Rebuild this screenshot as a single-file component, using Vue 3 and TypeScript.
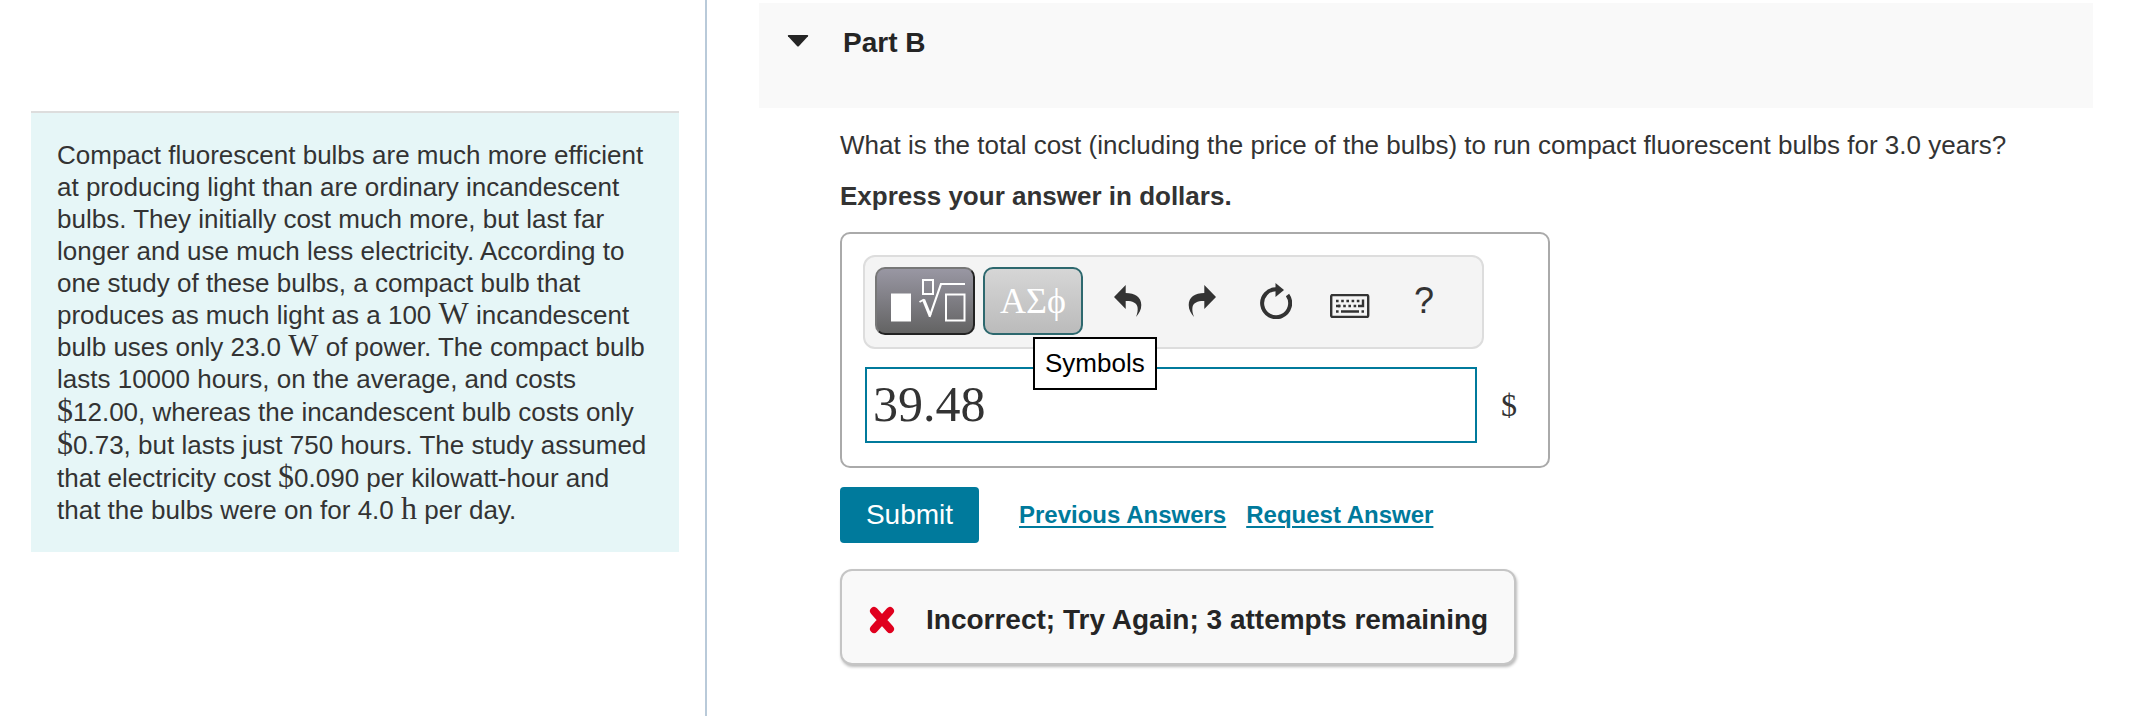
<script setup lang="ts">
import { ref } from 'vue'

const open = ref(true)
const answer = ref('39.48')
</script>

<template>
  <div class="page">
    <aside class="intro">
      <p class="problem">
        Compact fluorescent bulbs are much more efficient at producing light than are ordinary
        incandescent bulbs. They initially cost much more, but last far longer and use much less
        electricity. According to one study of these bulbs, a compact bulb that produces as much
        light as a 100 <span class="math">W</span> incandescent bulb uses only 23.0
        <span class="math">W</span> of power. The compact bulb lasts 10000 hours, on the average,
        and costs <span class="math cash">$</span>12.00, whereas the incandescent bulb costs only
        <span class="math cash">$</span>0.73, but lasts just 750 hours. The study assumed that
        electricity cost <span class="math cash">$</span>0.090 per kilowatt-hour and that the bulbs
        were on for 4.0 <span class="math">h</span> per day.
      </p>
    </aside>

    <main class="work">
      <header class="part">
        <button class="toggle" type="button" :aria-expanded="open" aria-label="Toggle Part B" @click="open = !open">
          <svg width="22" height="12" viewBox="0 0 22 12" aria-hidden="true">
            <path d="M1 1.2Q.2 0 1.8 0H20.200Q21.800 0 21 1.200L12 11Q11 12 10 11Z" fill="#252525" />
          </svg>
        </button>
        <h2>Part B</h2>
      </header>

      <section v-show="open" class="question">
        <p class="prompt">
          What is the total cost (including the price of the bulbs) to run compact fluorescent bulbs for 3.0 years?
        </p>
        <p class="instruction" id="instruction">Express your answer in dollars.</p>

        <div class="answer">
          <div class="toolbar" role="toolbar" aria-label="Math tools">
            <button class="key templates" type="button" aria-label="Templates">
              <svg width="96" height="64" viewBox="2 2 96 64" fill="none" stroke="#fff" aria-hidden="true">
                <path d="M16 26.500H36V54.500H16Z" fill="#fff" stroke="none" />
                <path d="M48 13H58V27H48ZM71 27.500H89.500V53.500H71Z" stroke-width="2" />
                <path d="M44.500 35L49 32.500" stroke-width="2" />
                <path d="M48.500 32.500L55 48.500" stroke-width="3.200" />
                <path d="M54.500 50L66 17H90" stroke-width="2.200" />
              </svg>
            </button>
            <div class="with-tip">
              <button class="key symbols" type="button" aria-describedby="symbols-tip">ΑΣϕ</button>
              <span id="symbols-tip" class="tip" role="tooltip">Symbols</span>
            </div>
            <div class="actions">
              <button type="button" aria-label="Undo">
                <svg width="28" height="32" viewBox="0 0 28 32" fill="#333" aria-hidden="true">
                  <path d="M0 12L11.700 0V8C21 8 27.300 12 27.300 20C27.300 25 25 28.500 22 32C23.500 28 24 25 23.500 22C22.500 17.500 18 15.800 11.700 16V24Z" />
                </svg>
              </button>
              <button type="button" aria-label="Redo">
                <svg width="28" height="32" viewBox="0 0 28 32" fill="#333" aria-hidden="true">
                  <path d="M28 12L16.300 0V8C7 8 .7 12 .7 20C.7 25 3 28.500 6 32C4.500 28 4 25 4.500 22C5.500 17.500 10 15.800 16.300 16V24Z" />
                </svg>
              </button>
              <button type="button" aria-label="Reset">
                <svg width="32" height="36" viewBox="0 0 32 36" aria-hidden="true">
                  <path d="M27.500 12A14 14 0 1 1 17 6.200" fill="none" stroke="#333" stroke-width="4" />
                  <path d="M15.500 0L24 7L15.500 14Z" fill="#333" />
                </svg>
              </button>
              <button class="low" type="button" aria-label="Keyboard shortcuts">
                <svg width="40" height="24" viewBox="0 0 40 24" aria-hidden="true">
                  <rect x="1.200" y="1" width="37" height="22" rx="1.500" fill="#f4f4f4" stroke="#333" stroke-width="2.400" />
                  <path d="M6 7H30M8 12H28" fill="none" stroke="#333" stroke-width="2.400" stroke-dasharray="2.600 2.600" />
                  <path d="M6 12H10M28 12H33V5.500M6 17.500H8.600M11 17.500H29M31.500 17.500H34" fill="none" stroke="#333" stroke-width="2.400" />
                </svg>
              </button>
              <button class="help" type="button" aria-label="Help">?</button>
            </div>
          </div>
          <div class="entry">
            <input v-model="answer" type="text" aria-label="Answer in dollars" aria-describedby="instruction" />
            <span class="unit">$</span>
          </div>
        </div>

        <div class="submit-row">
          <button class="submit" type="button">Submit</button>
          <a href="#previous">Previous Answers</a>
          <a href="#request">Request Answer</a>
        </div>

        <div class="feedback" role="status">
          <svg width="28" height="28" viewBox="0 0 28 28" aria-hidden="true">
            <path d="M6 5L22 23M22 5L6 23" stroke="#e0001e" stroke-width="8" stroke-linecap="round" />
          </svg>
          <strong>Incorrect; Try Again; 3 attempts remaining</strong>
        </div>
      </section>
    </main>
  </div>
</template>

<style>
body {
  margin: 0;
  background: #fff;
}
</style>

<style scoped>
.page {
  display: grid;
  grid-template-columns: minmax(0, 707fr) minmax(0, 1427fr);
  min-height: 100vh;
  color: #333;
  font: 26px/32px "Liberation Sans", Arial, sans-serif;
}

button {
  margin: 0;
  padding: 0;
  border: 0;
  background: none;
  color: inherit;
  font: inherit;
  cursor: pointer;
}

svg {
  display: block;
}

.intro {
  padding: 111px 26px 0 31px;
  border-right: 2px solid #b9cad9;
}

.problem {
  margin: 0;
  padding: 26px 26px 26px;
  border-top: 2px solid #ddd;
  background: #e6f6f7;
}

.math {
  font: 32px/28px "Liberation Serif", "Times New Roman", serif;
}

.cash {
  line-height: 30px;
}

.work {
  padding: 3px 41px 24px 52px;
}

.part {
  display: flex;
  align-items: flex-start;
  box-sizing: border-box;
  min-height: 105px;
  padding: 22px 28px;
  background: #f9f9f9;
  color: #252525;
}

.toggle {
  display: grid;
  place-items: center;
  width: 22px;
  height: 32px;
  margin-right: 34px;
}

h2 {
  margin: 0;
  font-size: 28px;
  line-height: 36px;
}

.question {
  padding: 21px 0 0 81px;
}

.prompt {
  margin: 0 0 19px;
}

.instruction {
  margin: 0 0 20px;
  font-weight: bold;
}

.answer {
  box-sizing: border-box;
  max-width: 710px;
  padding: 21px 22px 23px 21px;
  border: 2px solid #aaa;
  border-radius: 10px;
}

.toolbar {
  display: flex;
  align-items: center;
  gap: 8px;
  box-sizing: border-box;
  max-width: 621px;
  height: 94px;
  padding: 0 10px 2px;
  border: 2px solid #ddd;
  border-radius: 12px;
  background: #f4f4f4;
}

.key {
  display: block;
  box-sizing: border-box;
  width: 100px;
  height: 68px;
  border: 2px solid;
  border-radius: 10px;
  color: #fff;
}

.templates {
  border-color: #777 #222 #222 #777;
  background: linear-gradient(#9997a3, #636363);
}

.symbols {
  border-color: #2d686e;
  background: linear-gradient(#d6d6d6, #bbb);
  font: 36px/60px "Liberation Serif", "Times New Roman", serif;
}

.with-tip {
  position: relative;
}

.tip {
  position: absolute;
  top: 70px;
  left: 50px;
  z-index: 1;
  padding: 9px 10px 10px;
  border: 2px solid #000;
  background: #fff;
  color: #000;
  font-size: 26px;
  line-height: 30px;
}

.actions {
  display: flex;
  align-items: center;
}

.actions button {
  display: grid;
  place-items: center;
  width: 74px;
  height: 68px;
}

.actions .low {
  padding-top: 10px;
}

.actions .help {
  font-size: 36px;
}

.entry {
  display: flex;
  align-items: center;
  gap: 24px;
  margin: 18px 0 0 2px;
}

.entry input {
  box-sizing: border-box;
  flex: 0 1 612px;
  min-width: 0;
  height: 76px;
  padding: 0 6px 2px;
  border: 2px solid #007a9c;
  border-radius: 0;
  outline: 0;
  background: #fff;
  color: #333;
  font: 50px/70px "Liberation Serif", "Times New Roman", serif;
}

.unit {
  font: 32px/32px "Liberation Serif", "Times New Roman", serif;
}

.submit-row {
  display: flex;
  align-items: center;
  gap: 20px;
  margin: 19px 0 26px;
}

.submit {
  width: 139px;
  height: 56px;
  margin-right: 20px;
  border-radius: 4px;
  background: #007a9c;
  color: #fff;
  font-size: 28px;
}

a {
  color: #007a9c;
  font-size: 24px;
  font-weight: bold;
  text-decoration-thickness: 2px;
  text-underline-offset: 3px;
}

.feedback {
  display: flex;
  align-items: center;
  gap: 30px;
  box-sizing: border-box;
  width: fit-content;
  min-height: 96px;
  padding: 5px 26px 0;
  border: 2px solid #c5c5c5;
  border-radius: 12px;
  background: #f9f9f9;
  box-shadow: 1px 2px 3px #bbb;
  color: #252525;
  font-size: 28px;
}
</style>
